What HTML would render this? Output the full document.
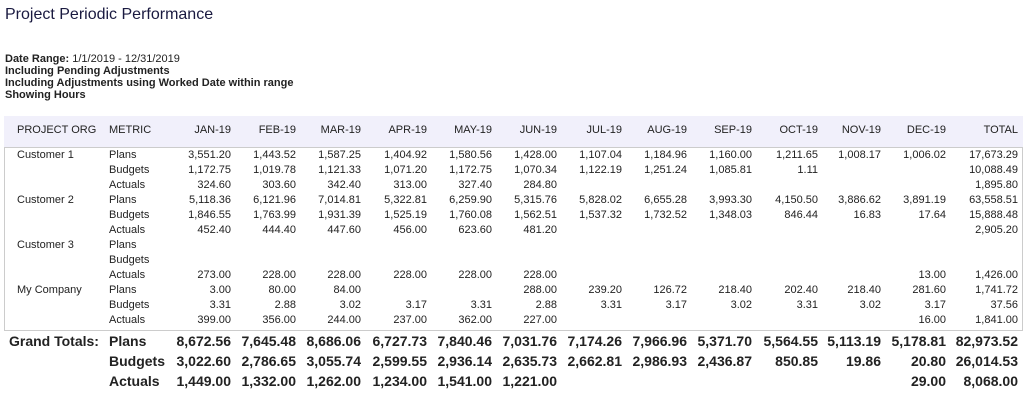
<!DOCTYPE html><html><head><style>
body{margin:0;width:1032px;height:404px;background:#fff;font-family:"Liberation Sans",Arial,sans-serif;color:#222;position:relative;overflow:hidden}
.t{position:absolute;left:5px;top:6px;font-size:16px;color:#1a1a40}
.info{position:absolute;left:5px;top:53px;font-size:11px;font-weight:bold;line-height:12px}
.info span{font-weight:normal}
table{position:absolute;left:4px;top:116px;border-collapse:collapse;font-size:11px;table-layout:fixed;width:1019px}
td{padding:0;height:15px;line-height:15px;text-align:right;white-space:nowrap;overflow:visible}
td.l{text-align:left;padding-left:13px}
td.m{text-align:left;padding-left:5px}
tr.h td{height:31px;line-height:29px;vertical-align:top;background:#f1f0fb;border-bottom:1px solid #ccc}
tr.s td{height:1px;line-height:1px}
.box{position:absolute;left:4px;top:116px;width:1017px;height:212px;border:1px solid #ccc;border-top:2px solid #ddd}
.g{position:absolute;top:331px;left:0;font-size:14px;font-weight:bold;color:#222}
.g table{top:0;left:4px;font-size:14px}
.g td{height:20px;line-height:20px}
</style></head><body>
<div class="t">Project Periodic Performance</div>
<div class="info">Date Range: <span>1/1/2019 - 12/31/2019</span><br>Including Pending Adjustments<br>Including Adjustments using Worked Date within range<br>Showing Hours</div>
<div class="box"></div>
<table>
<colgroup><col style="width:100px"><col style="width:62px"><col style="width:65px"><col style="width:65px"><col style="width:65px"><col style="width:66px"><col style="width:65px"><col style="width:65px"><col style="width:65px"><col style="width:65px"><col style="width:65px"><col style="width:66px"><col style="width:63px"><col style="width:65px"><col style="width:72px"><col style="width:5px"></colgroup>
<tr class="h"><td class="l">PROJECT ORG</td><td class="m">METRIC</td><td>JAN-19</td><td>FEB-19</td><td>MAR-19</td><td>APR-19</td><td>MAY-19</td><td>JUN-19</td><td>JUL-19</td><td>AUG-19</td><td>SEP-19</td><td>OCT-19</td><td>NOV-19</td><td>DEC-19</td><td>TOTAL</td><td></td></tr>
<tr><td class="l">Customer 1</td><td class="m">Plans</td><td>3,551.20</td><td>1,443.52</td><td>1,587.25</td><td>1,404.92</td><td>1,580.56</td><td>1,428.00</td><td>1,107.04</td><td>1,184.96</td><td>1,160.00</td><td>1,211.65</td><td>1,008.17</td><td>1,006.02</td><td>17,673.29</td><td></td></tr>
<tr><td class="l"></td><td class="m">Budgets</td><td>1,172.75</td><td>1,019.78</td><td>1,121.33</td><td>1,071.20</td><td>1,172.75</td><td>1,070.34</td><td>1,122.19</td><td>1,251.24</td><td>1,085.81</td><td>1.11</td><td></td><td></td><td>10,088.49</td><td></td></tr>
<tr><td class="l"></td><td class="m">Actuals</td><td>324.60</td><td>303.60</td><td>342.40</td><td>313.00</td><td>327.40</td><td>284.80</td><td></td><td></td><td></td><td></td><td></td><td></td><td>1,895.80</td><td></td></tr>
<tr><td class="l">Customer 2</td><td class="m">Plans</td><td>5,118.36</td><td>6,121.96</td><td>7,014.81</td><td>5,322.81</td><td>6,259.90</td><td>5,315.76</td><td>5,828.02</td><td>6,655.28</td><td>3,993.30</td><td>4,150.50</td><td>3,886.62</td><td>3,891.19</td><td>63,558.51</td><td></td></tr>
<tr><td class="l"></td><td class="m">Budgets</td><td>1,846.55</td><td>1,763.99</td><td>1,931.39</td><td>1,525.19</td><td>1,760.08</td><td>1,562.51</td><td>1,537.32</td><td>1,732.52</td><td>1,348.03</td><td>846.44</td><td>16.83</td><td>17.64</td><td>15,888.48</td><td></td></tr>
<tr><td class="l"></td><td class="m">Actuals</td><td>452.40</td><td>444.40</td><td>447.60</td><td>456.00</td><td>623.60</td><td>481.20</td><td></td><td></td><td></td><td></td><td></td><td></td><td>2,905.20</td><td></td></tr>
<tr><td class="l">Customer 3</td><td class="m">Plans</td><td></td><td></td><td></td><td></td><td></td><td></td><td></td><td></td><td></td><td></td><td></td><td></td><td></td><td></td></tr>
<tr><td class="l"></td><td class="m">Budgets</td><td></td><td></td><td></td><td></td><td></td><td></td><td></td><td></td><td></td><td></td><td></td><td></td><td></td><td></td></tr>
<tr><td class="l"></td><td class="m">Actuals</td><td>273.00</td><td>228.00</td><td>228.00</td><td>228.00</td><td>228.00</td><td>228.00</td><td></td><td></td><td></td><td></td><td></td><td>13.00</td><td>1,426.00</td><td></td></tr>
<tr><td class="l">My Company</td><td class="m">Plans</td><td>3.00</td><td>80.00</td><td>84.00</td><td></td><td></td><td>288.00</td><td>239.20</td><td>126.72</td><td>218.40</td><td>202.40</td><td>218.40</td><td>281.60</td><td>1,741.72</td><td></td></tr>
<tr><td class="l"></td><td class="m">Budgets</td><td>3.31</td><td>2.88</td><td>3.02</td><td>3.17</td><td>3.31</td><td>2.88</td><td>3.31</td><td>3.17</td><td>3.02</td><td>3.31</td><td>3.02</td><td>3.17</td><td>37.56</td><td></td></tr>
<tr><td class="l"></td><td class="m">Actuals</td><td>399.00</td><td>356.00</td><td>244.00</td><td>237.00</td><td>362.00</td><td>227.00</td><td></td><td></td><td></td><td></td><td></td><td>16.00</td><td>1,841.00</td><td></td></tr>
</table>
<div class="g"><table>
<colgroup><col style="width:100px"><col style="width:62px"><col style="width:65px"><col style="width:65px"><col style="width:65px"><col style="width:66px"><col style="width:65px"><col style="width:65px"><col style="width:65px"><col style="width:65px"><col style="width:65px"><col style="width:66px"><col style="width:63px"><col style="width:65px"><col style="width:72px"><col style="width:5px"></colgroup>
<tr><td style="text-align:left;padding-left:5px">Grand Totals:</td><td class="m">Plans</td><td>8,672.56</td><td>7,645.48</td><td>8,686.06</td><td>6,727.73</td><td>7,840.46</td><td>7,031.76</td><td>7,174.26</td><td>7,966.96</td><td>5,371.70</td><td>5,564.55</td><td>5,113.19</td><td>5,178.81</td><td>82,973.52</td><td></td></tr>
<tr><td></td><td class="m">Budgets</td><td>3,022.60</td><td>2,786.65</td><td>3,055.74</td><td>2,599.55</td><td>2,936.14</td><td>2,635.73</td><td>2,662.81</td><td>2,986.93</td><td>2,436.87</td><td>850.85</td><td>19.86</td><td>20.80</td><td>26,014.53</td><td></td></tr>
<tr><td></td><td class="m">Actuals</td><td>1,449.00</td><td>1,332.00</td><td>1,262.00</td><td>1,234.00</td><td>1,541.00</td><td>1,221.00</td><td></td><td></td><td></td><td></td><td></td><td>29.00</td><td>8,068.00</td><td></td></tr>
</table></div>
</body></html>
